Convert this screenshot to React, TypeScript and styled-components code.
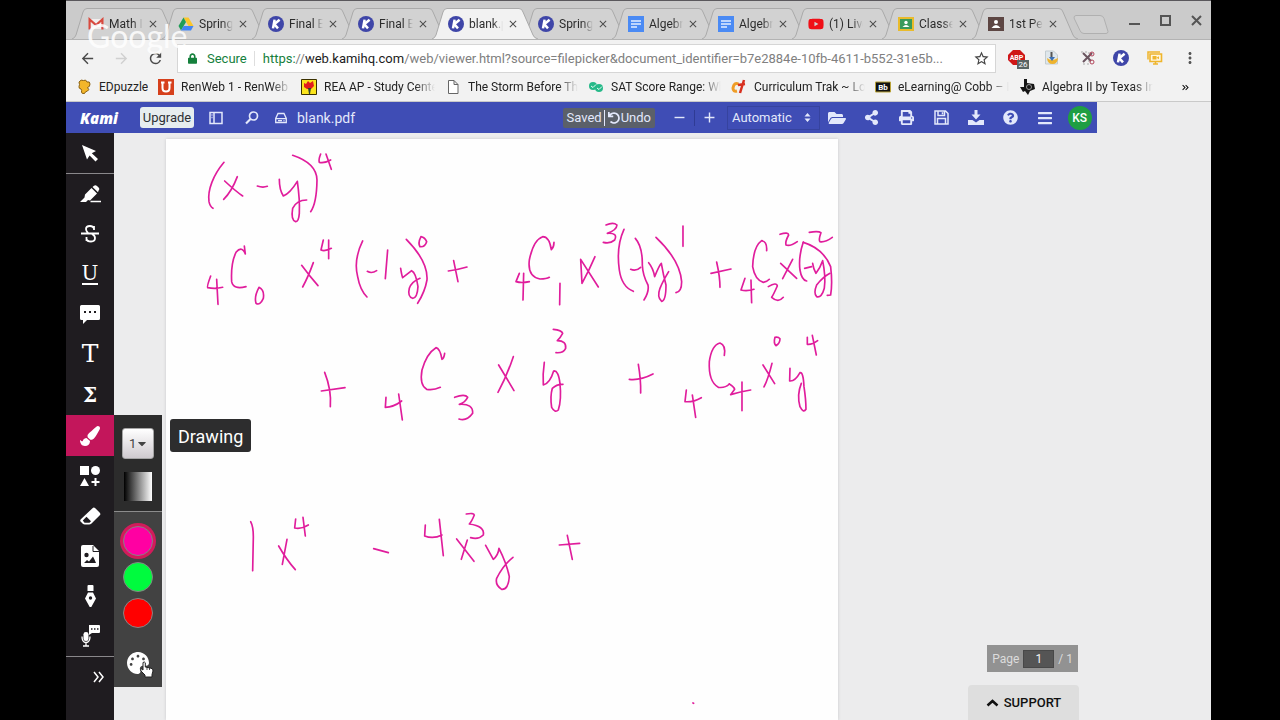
import React from "react";
import styled, { createGlobalStyle, css } from "styled-components";
import {
  FaPaintBrush, FaPalette, FaFolderOpen, FaShareAlt, FaPrint,
  FaQuestionCircle, FaBars, FaUndo, FaLock, FaYoutube, FaCaretDown,
} from "react-icons/fa";
import {
  MdArrowBack, MdArrowForward, MdRefresh, MdStarBorder, MdMoreVert, MdClose, MdKeyboardDoubleArrowRight,
  MdAdd, MdRemove,
} from "react-icons/md";

const GlobalStyle = createGlobalStyle`
  * { box-sizing: border-box; }
  body { margin: 0; background: #000; font-family: Roboto, "Liberation Sans", sans-serif; }
  button, input, select { font: inherit; color: inherit; margin: 0; }
`;

const Shell = styled.div`
  height: 100vh;
  padding: 0 69px 0 66px;
  background: #000;
  overflow: hidden;
`;
const Window = styled.div`
  height: 100%;
  display: flex;
  flex-direction: column;
  position: relative;
  background: #ececed;
`;
const PlainButton = styled.button`
  display: flex;
  align-items: center;
  justify-content: center;
  padding: 0;
  border: 0;
  background: none;
`;

/* Tab strip */
const TabStrip = styled.div`
  flex: none;
  height: 39px;
  display: flex;
  padding: 7px 0 0 6px;
  background: #cbcbcb;
  border-top: 1px solid #5a585c;
`;
const TabItem = styled.div<{ $active?: boolean }>`
  position: relative;
  z-index: ${(p) => (p.$active ? 1 : 0)};
  flex: 0 1 90px;
  min-width: 0;
  height: 31px;
  display: flex;
  align-items: center;
  padding-left: 16px;
`;
const TabShape = styled.svg`
  position: absolute;
  left: 0;
  top: 0;
  width: 106px;
  height: 31px;
  z-index: -1;
`;
const TabLink = styled.a`
  display: flex;
  align-items: center;
  gap: 5px;
  color: #2c2c2c;
  text-decoration: none;
  font-size: 12px;
  line-height: 16px;
`;
const TabTitle = styled.span`
  width: 34px;
  overflow: hidden;
  white-space: nowrap;
  mask-image: linear-gradient(90deg, #000 70%, transparent);
`;
const TabClose = styled(PlainButton)`
  position: relative;
  margin-left: 4px;
  width: 12px;
  height: 16px;
  flex: none;
  color: #4c4c4c;
  font-size: 12px;
`;
const NewTab = styled(PlainButton)`
  margin: 7px 0 0 11px;
  width: 36px;
  height: 20px;
`;
const WindowControls = styled.div`
  margin-left: auto;
  padding: 0 9px 0 0;
  display: flex;
  gap: 20px;
  height: 24px;
  align-items: center;
`;
const WindowButton = styled(PlainButton)`
  width: 11px;
  height: 22px;
`;

/* Address row */
const AddressRow = styled.div`
  flex: none;
  height: 37px;
  display: flex;
  align-items: center;
  padding-right: 4px;
  background: #f2f2f2;
  border-top: 1px solid #b3b3b3;
`;
const NavButtons = styled.div`
  display: flex;
  width: 111px;
  padding-left: 4px;
`;
const NavButton = styled(PlainButton)`
  width: 34px;
  height: 28px;
  font-size: 17px;
  color: #4a4a4a;
  &:disabled { color: #d0d0d0; }
`;
const Omnibox = styled.div`
  flex: 1;
  min-width: 0;
  height: 29px;
  display: flex;
  align-items: center;
  padding: 0 5px 0 10px;
  background: #fff;
  border: 1px solid #d6d6d6;
  font-size: 13px;
`;
const Secure = styled.span`
  display: flex;
  align-items: center;
  gap: 10px;
  padding-right: 7px;
  margin-right: 8px;
  border-right: 1px solid #dedede;
  color: #15803c;
  svg { width: 9px; height: 11px; }
`;
const Url = styled.span`
  flex: 1;
  min-width: 0;
  overflow: hidden;
  white-space: nowrap;
  color: #808080;
  b { font-weight: 400; color: #1c1c1c; }
  i { font-style: normal; color: #15803c; }
`;
const Extensions = styled.div`
  display: flex;
  width: 211px;
  padding-left: 5px;
`;
const Extension = styled(PlainButton)`
  flex: 1;
  height: 28px;
  color: #555;
`;

/* Bookmarks */
const Bookmarks = styled.nav`
  flex: none;
  height: 26px;
  display: flex;
  align-items: center;
  padding: 0 20px 3px 11px;
  background: #f2f2f2;
  border-bottom: 1px solid #c9c9c9;
`;
const Bookmark = styled.a<{ $width: number }>`
  flex: 0 1 ${(p) => p.$width}px;
  min-width: 0;
  display: flex;
  align-items: center;
  gap: 7px;
  color: #222;
  text-decoration: none;
  font-size: 12px;
  line-height: 16px;
`;
const BookmarkText = styled.span<{ $fade?: boolean }>`
  flex: 1;
  margin-right: 10px;
  overflow: hidden;
  white-space: nowrap;
  ${(p) => p.$fade && css`mask-image: linear-gradient(90deg, #000 82%, transparent);`}
`;

/* Kami header */
const Header = styled.header`
  flex: none;
  height: 31px;
  margin-right: 114px;
  display: flex;
  align-items: center;
  background: #3f4db5;
  color: #e3e8fb;
`;
const Brand = styled.a`
  width: 74px;
  padding-left: 14px;
  color: #fff;
  text-decoration: none;
  font: italic 800 15px/20px "Open Sans", sans-serif;
`;
const Upgrade = styled.button`
  height: 21px;
  width: 54px;
  margin-right: 4px;
  padding: 0;
  border: 0;
  border-radius: 3px;
  background: #e6edef;
  color: #2c3035;
  font-size: 13px;
`;
const HeaderButton = styled(PlainButton)`
  width: 36px;
  height: 30px;
`;
const FileName = styled.span`
  display: flex;
  align-items: center;
  gap: 10px;
  padding-left: 5px;
  font-size: 14px;
  line-height: 20px;
`;
const SaveState = styled.div`
  margin-left: auto;
  height: 20px;
  display: flex;
  align-items: center;
  padding: 0 4px;
  border-radius: 2px;
  background: #5b6069;
  font-size: 13px;
  line-height: 16px;
`;
const UndoButton = styled(PlainButton)`
  margin-left: 2px;
  padding-left: 3px;
  gap: 1px;
  border-left: 1px solid #e3e8fb;
`;
const ZoomButtons = styled.div`
  display: flex;
  padding-left: 10px;
  width: 72px;
`;
const ZoomButton = styled(PlainButton)`
  width: 29px;
  height: 16px;
  font-size: 17px;
  & + & { border-left: 1px solid #2f3b94; }
`;
const ZoomSelect = styled.label`
  display: flex;
  align-items: center;
  width: 93px;
  height: 24px;
  padding: 0 8px 0 4px;
  border: 1px solid #36439f;
  font-size: 13px;
  select { flex: 1; min-width: 0; padding: 0; border: 0; background: none; appearance: none; }
`;
const Actions = styled.div`
  display: grid;
  grid-template-columns: repeat(8, 1fr);
  width: 277px;
  align-items: center;
  font-size: 15px;
`;
const Avatar = styled(PlainButton)`
  justify-self: center;
  width: 24px;
  height: 24px;
  border-radius: 50%;
  background: #1f9e43;
  color: #fff;
  font-size: 12px;
  font-weight: 500;
`;

/* Work area */
const Workspace = styled.main`
  flex: 1;
  min-height: 0;
  position: relative;
  display: flex;
`;
const ToolRail = styled.div`
  flex: none;
  width: 48px;
  display: flex;
  flex-direction: column;
  background: #1f1c20;
  color: #fff;
`;
const Tool = styled(PlainButton)<{ $tall?: boolean; $active?: boolean }>`
  flex: none;
  width: 48px;
  height: ${(p) => (p.$tall ? 41 : 40)}px;
  background: ${(p) => (p.$active ? "#c3165b" : "transparent")};
  font-size: 20px;
`;
const ToolRule = styled.div`
  flex: none;
  height: 1px;
  background: #8a888b;
`;
const Glyph = styled.span<{ $kind: "text" | "underline" | "sum" }>`
  font-family: "DejaVu Serif", serif;
  font-size: ${(p) => (p.$kind === "text" ? 25 : 20)}px;
  line-height: ${(p) => (p.$kind === "underline" ? 19 : 24)}px;
  font-weight: ${(p) => (p.$kind === "sum" ? 700 : 400)};
  border-bottom: ${(p) => (p.$kind === "underline" ? "2px solid #fff" : "0")};
`;
const Anchor = styled.div`
  position: relative;
`;
const Flyout = styled.div`
  position: absolute;
  z-index: 2;
  left: 100%;
  top: 0;
  width: 48px;
  height: 272px;
  display: flex;
  flex-direction: column;
  background: #424242;
`;
const FlyoutTop = styled.div`
  display: flex;
  flex-direction: column;
  align-items: center;
  gap: 13px;
  height: 97px;
  padding-top: 13px;
  background: #2c2c2c;
  border-bottom: 1px solid #8c8c8c;
`;
const SizeSelect = styled.label`
  display: flex;
  align-items: center;
  width: 32px;
  height: 31px;
  padding: 0 6px;
  border-radius: 3px;
  border: 1px solid #a5a5a5;
  background: linear-gradient(#fff, #cfcacf);
  color: #444;
  font-size: 13px;
  select { width: 8px; padding: 0; border: 0; background: none; appearance: none; }
`;
const Opacity = styled.button`
  width: 28px;
  height: 29px;
  padding: 0;
  border: 0;
  background: linear-gradient(90deg, #000, #fff);
`;
const Swatches = styled.div`
  display: flex;
  flex-direction: column;
  align-items: center;
  gap: 6px;
  padding-top: 14px;
`;
const Swatch = styled.input<{ $color: string }>`
  appearance: none;
  width: 30px;
  height: 30px;
  border-radius: 50%;
  border: 1px solid #858585;
  background: ${(p) => p.$color};
  &:checked { box-shadow: 0 0 0 3px #d31b5b; }
`;
const PaletteButton = styled(PlainButton)`
  position: relative;
  margin-top: 15px;
  height: 28px;
  color: #fff;
  font-size: 22px;
`;
const HandCursor = styled.svg`
  position: absolute;
  left: 12px;
  top: 12px;
`;
const Tooltip = styled.div`
  position: absolute;
  z-index: 2;
  left: 104px;
  top: 4px;
  height: 33px;
  padding: 0 8px;
  border-radius: 3px;
  background: #2d2d2e;
  font-size: 18px;
  line-height: 35px;
`;
const Viewer = styled.section`
  flex: 1;
  min-width: 0;
  display: flex;
  padding: 6px 0 0 52px;
  overflow: hidden;
`;
const Sheet = styled.article`
  flex: 0 1 672px;
  background: #fefefe;
  box-shadow: 0 0 3px #c8c8ca;
`;
const Ink = styled.svg`
  display: block;
  fill: none;
  stroke: #e01d9c;
  stroke-width: 5;
  stroke-linecap: round;
  stroke-linejoin: round;
`;
const Dock = styled.div`
  position: absolute;
  right: 132px;
  bottom: 0;
  display: flex;
  flex-direction: column;
  align-items: flex-end;
  gap: 13px;
`;
const Pager = styled.label`
  display: flex;
  align-items: center;
  gap: 4px;
  height: 27px;
  margin-right: 1px;
  padding: 0 5px;
  background: #929292;
  color: #dcdcdc;
  font-size: 12px;
  input {
    width: 31px;
    height: 18px;
    padding: 0;
    border: 1px solid #484848;
    background: #555;
    color: #f4f4f4;
    text-align: center;
  }
`;
const Support = styled(PlainButton)`
  width: 111px;
  height: 35px;
  gap: 5px;
  border-radius: 4px 4px 0 0;
  background: #dedede;
  color: #111;
  font-size: 13px;
  font-weight: 500;
`;
const Watermark = styled.div`
  position: absolute;
  z-index: 3;
  left: 21px;
  top: 17px;
  color: rgba(255, 255, 255, 0.85);
  font: 32px/38px Lato, sans-serif;
  pointer-events: none;
`;

const KamiMark = ({ size = 16 }: { size?: number }) => (
  <svg width={size} height={size} viewBox="0 0 16 16">
    <circle cx="8" cy="8" r="8" fill="#3f46a8" />
    <path d="M6.6 3.6 5 12.4M11.6 3.8 6.2 8.2 10 12.4" stroke="#fff" strokeWidth="2.5" fill="none" />
  </svg>
);
const icons: Record<string, React.ReactNode> = {
  gmail: (
    <svg width="16" height="16" viewBox="0 0 16 16">
      <path d="M1 3h14v10H1z" fill="#f1eeee" />
      <path d="M1.6 13.5V3.5L8 9l6.4-5.5v10" stroke="#d84a3f" strokeWidth="2.2" fill="none" />
    </svg>
  ),
  drive: (
    <svg width="16" height="16" viewBox="0 0 16 16">
      <path d="M5.5 1.5h5l5 8.5h-5z" fill="#fbc62c" />
      <path d="M5.5 1.5 8 6 3 14.5.5 10z" fill="#1f9d57" />
      <path d="M5.6 10h9.9L13 14.5H3z" fill="#4285f4" />
    </svg>
  ),
  kami: <KamiMark />,
  docs: (
    <svg width="16" height="16" viewBox="0 0 16 16">
      <path d="M0 0h16v16H0z" fill="#4a8af4" />
      <path d="M3 5h10M3 8h10M3 11h6" stroke="#e4eeff" strokeWidth="1.4" />
    </svg>
  ),
  youtube: <FaYoutube size={16} color="#f00f17" />,
  classroom: (
    <svg width="16" height="16" viewBox="0 0 16 16">
      <path d="M0 1h16v14H0z" fill="#e9bb2c" />
      <path d="M2 3h12v10H2z" fill="#3a9a5c" />
      <circle cx="8" cy="6.5" r="1.7" fill="#fff" />
      <path d="M4.5 11q3.500-4 7 0z" fill="#fff" />
    </svg>
  ),
  roster: (
    <svg width="16" height="16" viewBox="0 0 16 16">
      <path d="M0 1h16v14H0z" fill="#5d4643" />
      <circle cx="8" cy="6" r="2" fill="#fff" />
      <path d="M3.500 12q4.500-6 9 0z" fill="#fff" />
    </svg>
  ),
  edpuzzle: (
    <svg width="15" height="16" viewBox="0 0 15 16">
      <path d="M2 3q2-3 4.500-1.500Q9 0 10 3q3-1 3 2t-2.500 3.500Q13 11 10.500 12q-2.500.5-3 2.500-3 .5-3-1.500Q5 11 4 10q-2.500-.5-2-2.500Q3 6 2 3z" fill="#f3b62a" stroke="#8a6113" />
    </svg>
  ),
  renweb: (
    <svg width="16" height="16" viewBox="0 0 16 16">
      <path d="M0 0h16v16H0z" fill="#d6401c" />
      <path d="M4.500 3v6q0 3.500 3.500 3.500t3.500-3.500V3M3 3.500h3.500M10 3.500h3.500" stroke="#fff" strokeWidth="2" fill="none" />
    </svg>
  ),
  rea: (
    <svg width="16" height="16" viewBox="0 0 16 16">
      <path d="M.5.5h15v15H.5z" fill="#fbe51d" stroke="#3a3000" />
      <path d="M3 4l2 1 2-3 2 2 3-2 1 5-3 3H6L3 8z" fill="#e21d1d" />
      <path d="M7 9h3l-1 6H8z" fill="#343" />
    </svg>
  ),
  page: (
    <svg width="16" height="16" viewBox="0 0 16 16">
      <path d="M3.500 1.500h5.500l4 4v9h-9.500zM9 1.500v4h4" fill="#fff" stroke="#666" />
    </svg>
  ),
  sat: (
    <svg width="16" height="16" viewBox="0 0 16 16">
      <circle cx="5" cy="7" r="4" fill="#27b989" />
      <circle cx="11" cy="9" r="4" fill="#27b989" />
      <path d="M3 7l2 1.500 3-3M9 9l2 1.500 3-3" stroke="#e8fff6" fill="none" />
    </svg>
  ),
  trak: (
    <svg width="16" height="16" viewBox="0 0 16 16">
      <path d="M7.500 5Q3 3 2 9q0 4 4 3" stroke="#ef9d27" strokeWidth="3" fill="none" />
      <path d="M13 1 9 14M7 6l7-1" stroke="#d8301f" strokeWidth="2.5" />
    </svg>
  ),
  bb: (
    <svg width="16" height="16" viewBox="0 0 16 16">
      <path d="M.5 3h15v10H.5z" fill="#111" stroke="#b8a23a" />
      <text x="8" y="11" textAnchor="middle" fontSize="8" fontWeight="700" fill="#fff">Bb</text>
    </svg>
  ),
  texas: (
    <svg width="16" height="16" viewBox="0 0 16 16">
      <path d="M5 0h3v4l7 1 1 5-5 2-2 4-3-4-2 1-3-5h4z" fill="#151515" />
      <circle cx="10" cy="8" r="2.500" stroke="#999" fill="none" />
    </svg>
  ),
};

const tabs: [string, string, boolean?][] = [
  ["gmail", "Math I"], ["drive", "Spring"], ["kami", "Final E"], ["kami", "Final E"], ["kami", "blank.p", true],
  ["kami", "Spring"], ["docs", "Algebra"], ["docs", "Algebra"], ["youtube", "(1) Live"], ["classroom", "Classes"],
  ["roster", "1st Per"],
];
const bookmarks: [string, string, number, boolean?][] = [
  ["edpuzzle", "EDpuzzle", 81],
  ["renweb", "RenWeb 1 - RenWeb I", 143, true],
  ["rea", "REA AP - Study Center", 144, true],
  ["page", "The Storm Before The", 143, true],
  ["sat", "SAT Score Range: Wha", 143, true],
  ["trak", "Curriculum Trak ~ Log", 144, true],
  ["bb", "eLearning@ Cobb – Ho", 144, true],
  ["texas", "Algebra II by Texas Ins", 144, true],
];

/* Handwriting: each block of strokes is recorded at three times the sheet's scale. */
const ink: { x: number; y: number; strokes: string[] }[] = [
  {
    x: 24, y: 1,
    strokes: [
      "M102 67C70 105 52 150 57 185Q60 200 69 205", "M104 123Q135 152 158 168M142 110Q125 155 101 178", "M202 138Q218 144 232 139",
      "M268 118Q268 150 280 168Q300 160 322 124Q330 180 328 220Q326 246 317 245Q302 240 308 205Q320 180 350 180",
      "M308 46Q380 70 381 120Q380 190 362 215", "M392 42Q385 60 388 67Q405 70 422 60M408 42L424 88",
      "M62 408Q50 440 53 443Q75 448 98 442M80 418L84 493", "M163 318L166 342Q156 316 138 337Q122 370 125 425Q130 450 168 440",
      "M207 442Q192 470 198 490Q210 498 220 475Q224 450 207 442", "M335 376Q360 410 384 437M370 368Q355 410 338 441",
      "M400 300L393 330Q405 335 424 325M416 300L416 356", "M518 303Q490 360 503 410Q510 450 531 471", "M532 394Q545 402 560 392",
      "M593 330L586 416", "M632 385Q635 405 638 413Q655 400 665 392Q678 398 684 440Q682 475 668 475Q652 470 658 445Q665 425 690 415",
      "M649 298Q715 365 711 420Q705 455 683 490", "M693 290Q683 310 690 320Q705 322 710 305Q705 292 693 290", "M775 393Q800 390 831 381M791 362L804 425",
    ],
  },
  {
    x: 324, y: 71,
    strokes: [
      "M88 190L78 215Q95 220 118 215M101 190L99 270", "M192 97Q192 112 184 119Q178 80 158 80Q130 90 118 150Q112 200 150 207Q170 207 178 202",
      "M210 220L209 284", "M276 220L272 148L325 231M315 140Q298 180 276 220", "M348 45Q370 35 381 45Q380 60 352 70Q385 68 374 90Q360 102 340 97",
      "M402 58Q378 110 388 180Q395 230 430 244", "M422 178Q438 185 452 172", "M436 85Q458 110 457 165Q458 195 474 225Q478 245 462 270",
      "M476 158Q490 175 494 200Q508 165 514 160Q520 195 528 225Q528 272 515 274Q500 262 510 235Q518 215 536 185",
      "M498 82Q570 150 575 215Q575 245 558 248", "M579 48L579 109", "M663 190L723 177M680 156Q690 200 690 232",
      "M765 205L753 240Q770 245 792 238M783 210L785 278", "M830 122Q832 95 815 92Q790 110 788 170Q795 210 820 217Q832 215 838 208",
      "M835 230Q860 215 862 228Q850 255 845 262Q865 280 880 262", "M872 160L920 205M908 148L878 206",
      "M870 73Q895 65 896 75Q885 95 888 105Q900 110 922 95", "M940 96Q925 140 930 180Q935 210 950 213", "M944 175L965 170",
      "M968 160Q970 175 978 190Q990 175 998 152Q1008 200 1003 235Q995 265 980 260Q970 250 980 225Q1000 200 1020 190",
      "M940 97Q1000 115 1022 170Q1028 220 1022 255L1012 256", "M958 67Q985 62 993 68Q985 90 990 95Q1005 98 1027 82",
    ],
  },
  {
    x: 144, y: 181,
    strokes: [
      "M34 213L105 203M44 157Q65 210 61 260", "M228 232L226 262Q250 262 275 243M266 222L277 300",
      "M404 100Q402 115 396 118Q390 85 378 83Q350 100 336 150Q328 195 350 208Q370 212 391 202",
      "M434 232Q465 220 473 232Q465 248 448 253Q490 250 488 280Q470 305 447 297", "M566 135L612 212M610 110Q590 170 564 217",
      "M703 127Q698 160 700 195Q720 190 731 153Q745 150 750 190Q755 240 745 270Q735 280 725 262Q720 230 727 205Q740 192 759 193",
      "M730 28Q755 30 758 40Q750 55 742 62Q770 62 767 85Q760 100 738 98",
    ],
  },
  {
    x: 444, y: 181,
    strokes: [
      "M58 178Q90 182 129 162M85 133Q93 180 92 219", "M229 210L225 245Q250 247 274 233M247 225L257 292",
      "M343 106Q348 75 330 69Q305 75 298 125Q295 185 325 202Q345 205 358 192", "M358 192Q372 200 374 208L362 224Q390 215 422 210M396 186L396 272",
      "M459 135L494 191M486 130Q475 175 462 201", "M495 52Q490 70 498 77Q510 70 510 56Q505 50 495 52",
      "M540 145L539 183Q555 185 570 158Q580 155 582 200Q588 240 588 268Q580 280 570 260Q560 225 574 190", "M592 52L592 73Q605 75 623 62M607 46L619 105",
    ],
  },
  {
    x: 64, y: 361,
    strokes: [
      "M62 65Q70 80 70 110L68 212", "M146 138Q170 180 196 209M171 118L157 193", "M197 57L194 84Q215 88 235 75M219 52L226 108",
      "M431 146L475 158", "M586 75L584 108Q610 118 636 105M628 58L640 167", "M680 117L732 184M712 120L694 178",
      "M709 42Q732 38 733 45Q725 65 718 72Q765 78 760 105Q745 120 722 113",
      "M767 136L790 178Q805 165 807 145Q830 190 838 230Q835 270 815 268Q795 255 800 235Q820 195 849 172", "M988 135L1049 130M1012 106L1027 178",
      "M1389 609L1391 610",
    ],
  },
];

export default function App() {
  return (
    <Shell>
      <GlobalStyle />
      <Window>
        <TabStrip>
          {tabs.map(([icon, title, active], i) => (
            <TabItem key={i} $active={active}>
              <TabShape viewBox="0 0 106 31">
                <path d="M0 31Q3 30 4 27L11 4Q12 .5 15 .5H87Q90 .5 91 4L101 27Q102 30 106 31" fill={active ? "#f2f2f2" : "#d2d2d2"} stroke="#aaa" />
              </TabShape>
              <TabLink href="#">
                {icons[icon]}
                <TabTitle>{title}</TabTitle>
              </TabLink>
              <TabClose aria-label={`Close ${title}`}><MdClose /></TabClose>
            </TabItem>
          ))}
          <NewTab aria-label="New tab">
            <svg width="36" height="20" viewBox="0 0 36 20">
              <path d="M3 .5h24q3 0 4 3l4 13q0 2-2 2H11q-3 0-4-3L1 3Q1 .5 3 .5z" fill="#d0d0d0" stroke="#b0b0b0" />
            </svg>
          </NewTab>
          <WindowControls>
            <WindowButton aria-label="Minimize"><svg width="11" height="11"><path d="M0 9h11" stroke="#555" strokeWidth="2" /></svg></WindowButton>
            <WindowButton aria-label="Maximize"><svg width="11" height="11"><path d="M1 1h9v9H1z" fill="none" stroke="#555" strokeWidth="2" /></svg></WindowButton>
            <WindowButton aria-label="Close window"><svg width="11" height="11"><path d="M1 1l9 9M10 1l-9 9" stroke="#555" strokeWidth="2" /></svg></WindowButton>
          </WindowControls>
        </TabStrip>

        <AddressRow>
          <NavButtons>
            <NavButton aria-label="Back"><MdArrowBack /></NavButton>
            <NavButton aria-label="Forward" disabled><MdArrowForward /></NavButton>
            <NavButton aria-label="Reload"><MdRefresh /></NavButton>
          </NavButtons>
          <Omnibox>
            <Secure><FaLock />Secure</Secure>
            <Url role="textbox" aria-label="Address">
              <i>https:</i>//<b>web.kamihq.com</b>/web/viewer.html?source=filepicker&amp;document_identifier=b7e2884e-10fb-4611-b552-31e5b...
            </Url>
            <PlainButton aria-label="Bookmark this page"><MdStarBorder size={17} color="#444" /></PlainButton>
          </Omnibox>
          <Extensions>
            <Extension aria-label="Adblock Plus">
              <svg width="22" height="22" viewBox="0 0 22 22">
                <path d="M6 3h7l5 5v5l-5 5H6L1 13V8z" fill="#cf1717" />
                <text x="9.500" y="13" textAnchor="middle" fontSize="7" fontWeight="700" fill="#fff">ABP</text>
                <path d="M10 13h12v9H10z" fill="#5a6464" />
                <text x="16" y="20" textAnchor="middle" fontSize="8" fill="#fff">26</text>
              </svg>
            </Extension>
            <Extension aria-label="Downloads">
              <svg width="16" height="16" viewBox="0 0 16 16">
                <path d="M1.500 1h8l4 4v9h-12z" fill="#dfe7ec" stroke="#c3ccd0" />
                <path d="M7.500 2v6" stroke="#555" strokeWidth="2" />
                <path d="M3 8q4.500 4 11 0-.5 6-5.500 6T3 8z" fill="#eeb32d" />
                <path d="M5 7h6l-3 4z" fill="#3b70b5" />
              </svg>
            </Extension>
            <Extension aria-label="Snip">
              <svg width="16" height="16" viewBox="0 0 16 16">
                <path d="M2 2h8v12H2" fill="none" stroke="#aaa" strokeDasharray="2 2" />
                <path d="M4 3l8 8M4 12l9-9" stroke="#6b5560" strokeWidth="2" />
                <circle cx="13" cy="4" r="2" stroke="#b2455a" fill="none" /><circle cx="13" cy="12" r="2" stroke="#b2455a" fill="none" />
              </svg>
            </Extension>
            <Extension aria-label="Kami extension"><KamiMark /></Extension>
            <Extension aria-label="Screencast">
              <svg width="16" height="16" viewBox="0 0 16 16">
                <path d="M1 9.500V2h12" stroke="#efb52c" strokeWidth="1.500" fill="none" />
                <path d="M3 4h11.500v7.500H3zM6 14h5M8.500 12v2" stroke="#efb52c" strokeWidth="1.600" fill="#fff6dc" />
                <path d="M5.500 6h4v3.500h-4zM9.500 7.700l2.500-1.500v3z" fill="#efb52c" />
              </svg>
            </Extension>
            <Extension aria-label="Menu"><MdMoreVert size={18} /></Extension>
          </Extensions>
        </AddressRow>

        <Bookmarks>
          {bookmarks.map(([icon, text, width, fade]) => (
            <Bookmark href="#" key={text} $width={width}>
              {icons[icon]}
              <BookmarkText $fade={fade}>{text}</BookmarkText>
            </Bookmark>
          ))}
          <PlainButton aria-label="More bookmarks" style={{ marginLeft: "auto" }}><MdKeyboardDoubleArrowRight size={11} /></PlainButton>
        </Bookmarks>

        <Header>
          <Brand href="#">Kami</Brand>
          <Upgrade>Upgrade</Upgrade>
          <HeaderButton aria-label="Toggle side panel">
            <svg width="14" height="14" viewBox="0 0 14 14"><path d="M1 1.500h12v11H1zM5 1v12M2.500 4h1M2.500 6.500h1" fill="none" stroke="currentColor" strokeWidth="1.500" /></svg>
          </HeaderButton>
          <HeaderButton aria-label="Search">
            <svg width="14" height="14" viewBox="0 0 14 14"><circle cx="8.500" cy="5" r="4" fill="none" stroke="currentColor" strokeWidth="1.700" /><path d="M5.500 8 1 12.500" stroke="currentColor" strokeWidth="2.200" /></svg>
          </HeaderButton>
          <FileName>
            <svg width="12" height="12" viewBox="0 0 12 12"><path d="M3 1.500h6l2.300 5v4H.7v-4zM1 6.700h10M3 8.700h4M8.500 8.700h1" fill="none" stroke="currentColor" strokeWidth="1.300" /></svg>
            blank.pdf
          </FileName>
          <SaveState>Saved<UndoButton><FaUndo size={12} />Undo</UndoButton></SaveState>
          <ZoomButtons>
            <ZoomButton aria-label="Zoom out"><MdRemove /></ZoomButton>
            <ZoomButton aria-label="Zoom in"><MdAdd /></ZoomButton>
          </ZoomButtons>
          <ZoomSelect>
            <select aria-label="Zoom level"><option>Automatic</option></select>
            <svg width="7" height="9" viewBox="0 0 7 9"><path d="M3.500 0 6.500 3.500h-6zM3.500 9l3-3.500h-6z" fill="currentColor" /></svg>
          </ZoomSelect>
          <Actions>
            <PlainButton aria-label="Open"><FaFolderOpen size={18} /></PlainButton>
            <PlainButton aria-label="Share"><FaShareAlt /></PlainButton>
            <PlainButton aria-label="Print"><FaPrint /></PlainButton>
            <PlainButton aria-label="Save">
              <svg width="15" height="15" viewBox="0 0 15 15"><path d="M1 1h10.500L14 3.500V14H1zM4 1v4.500h6.500V1M3.500 14V8.500h8V14M8.500 2.200v2" fill="none" stroke="currentColor" strokeWidth="1.500" /></svg>
            </PlainButton>
            <PlainButton aria-label="Download">
              <svg width="16" height="16" viewBox="0 0 16 16"><path d="M6.500 0h3v4.500h3L8 9.500 3.500 4.500h3z" fill="currentColor" /><path d="M0 10h4.500L8 12.500 11.500 10H16v5H0z" fill="currentColor" /></svg>
            </PlainButton>
            <PlainButton aria-label="Help"><FaQuestionCircle /></PlainButton>
            <PlainButton aria-label="Menu"><FaBars size={16} /></PlainButton>
            <Avatar aria-label="Account">KS</Avatar>
          </Actions>
        </Header>

        <Workspace>
          <ToolRail>
            <Tool aria-label="Select">
              <svg width="16" height="17" viewBox="0 0 16 17"><path d="M0 0 14 6 9.800 8.300 16 14 13.500 16.500 7.600 10.500 5 14.500z" fill="#fff" /></svg>
            </Tool>
            <ToolRule />
            <Tool aria-label="Highlight">
              <svg width="21" height="18" viewBox="0 0 21 18"><path d="M5 9.500 11.500 3 17 8.500 10 15.500 8 15 6 17H0L4.500 12.500zM12.500 2 14 .8q1.500-1.200 3 .2l1.600 1.600q1.400 1.500 0 3L18 7.300z" fill="#fff" /><path d="M10.500 16.500H21" stroke="#fff" strokeWidth="1.500" /></svg>
            </Tool>
            <Tool aria-label="Strikethrough">
              <svg width="18" height="20" viewBox="0 0 18 20"><path d="M0 9.500h18M13 6V2M13 4.500Q12 2 9 2 5 2 5 5q0 2 2 4M11 10q3 1.500 3 4 0 3.500-4 3.500T5.500 15M5.500 13v4" fill="none" stroke="#fff" strokeWidth="1.800" /></svg>
            </Tool>
            <Tool aria-label="Underline"><Glyph $kind="underline">U</Glyph></Tool>
            <Tool aria-label="Comment">
              <svg width="20" height="20" viewBox="0 0 20 20"><path d="M1.500 1h17Q20 1 20 2.500v12Q20 16 18.500 16H7l-4 4v-4H1.500Q0 16 0 14.500v-12Q0 1 1.500 1z" fill="#fff" /><path d="M4 8h2M9 8h2M14 8h2" stroke="#1f1c20" strokeWidth="2" /></svg>
            </Tool>
            <Tool aria-label="Text"><Glyph $kind="text">T</Glyph></Tool>
            <Tool $tall aria-label="Equation"><Glyph $kind="sum">Σ</Glyph></Tool>
            <Anchor>
              <Tool $tall $active aria-label="Drawing"><FaPaintBrush /></Tool>
              <Flyout>
                <FlyoutTop>
                  <SizeSelect>
                    <select aria-label="Line size"><option>1</option></select>
                    <FaCaretDown size={13} />
                  </SizeSelect>
                  <Opacity aria-label="Opacity" />
                </FlyoutTop>
                <Swatches>
                  <Swatch type="radio" name="ink" aria-label="Pink" $color="#ff00a2" defaultChecked />
                  <Swatch type="radio" name="ink" aria-label="Green" $color="#00fb3e" />
                  <Swatch type="radio" name="ink" aria-label="Red" $color="#ff0000" />
                  <PaletteButton aria-label="More colors">
                    <FaPalette />
                    <HandCursor width="15" height="17" viewBox="0 0 15 17">
                      <path d="M4 1.500Q5.500.3 6.300 1.800V6l5.700 1.200q2.300.6 2 2.800l-1 3.500v2.500H6V14L2 10Q1 8.500 2.500 8L4 9z" fill="#fff" stroke="#222" />
                      <path d="M8 6.500v2.500M10.500 7v2" stroke="#222" strokeWidth=".8" />
                    </HandCursor>
                  </PaletteButton>
                </Swatches>
              </Flyout>
              <Tooltip role="tooltip">Drawing</Tooltip>
            </Anchor>
            <Tool aria-label="Shapes">
              <svg width="20" height="20" viewBox="0 0 20 20"><path d="M0 0h9v9H0zM4.500 12 9 20H0z" fill="#fff" /><circle cx="15.500" cy="4.500" r="4.500" fill="#fff" /><path d="M15.500 12v8M11.500 16h8" stroke="#fff" strokeWidth="2" /></svg>
            </Tool>
            <Tool aria-label="Eraser">
              <svg width="21" height="18" viewBox="0 0 21 18"><path d="M12.500 1.200q1.300-1.400 2.800 0l4.500 4.500q1.200 1.300 0 2.600L11.500 16.500q-1 1-2.500 1H5Q3.500 17.500 2.500 16.500L.8 14.800q-1.200-1.300 0-2.600z" fill="#fff" /><path d="M6.500 9.800 11 14.300 9.500 15.700H4.500L2.800 13.500z" fill="#1f1c20" /></svg>
            </Tool>
            <Tool aria-label="Image">
              <svg width="18" height="22" viewBox="0 0 18 22"><path d="M2 0h10l6 6v14q0 2-2 2H2q-2 0-2-2V2Q0 0 2 0z" fill="#fff" /><path d="M12 1v5.500h6" stroke="#1f1c20" fill="none" /><circle cx="5.500" cy="10" r="2.200" fill="#1f1c20" /><path d="M3 18l3-3 2 1.500 4-5 1.500 3L15 18z" fill="#1f1c20" /></svg>
            </Tool>
            <Tool aria-label="Signature">
              <svg width="11" height="22" viewBox="0 0 11 22"><path d="M2.500 1Q2.500 0 3.500 0h4q1 0 1 1v5h-6zM3 7.500h5l3 6L6.300 22H4.700L0 13.500z" fill="#fff" /><circle cx="5.500" cy="13" r="1.700" fill="#1f1c20" /></svg>
            </Tool>
            <Tool aria-label="Voice comment">
              <svg width="20" height="22" viewBox="0 0 20 22"><path d="M9 0h10q1 0 1 1v6q0 1-1 1h-7L9 10z" fill="#fff" /><path d="M11 4h1.500M14 4h1.500M17 4h1.500" stroke="#1f1c20" strokeWidth="1.500" /><rect x="3.500" y="7" width="5" height="9" rx="2.300" fill="#fff" /><path d="M2 11.500q0 6 4 6t4-6M6 17v4M3 21h6" stroke="#fff" strokeWidth="1.300" fill="none" /></svg>
            </Tool>
            <ToolRule />
            <Tool aria-label="Expand tools">
              <svg width="11" height="12" viewBox="0 0 11 12" style={{ marginLeft: 16 }}><path d="M1 1l4 5-4 5M6 1l4 5-4 5" fill="none" stroke="#fff" strokeWidth="1.500" /></svg>
            </Tool>
          </ToolRail>

          <Viewer>
            <Sheet>
              <Ink width="672" height="581" viewBox="0 0 672 581" role="img" aria-label="Handwritten binomial expansion">
                {ink.map((block) => (
                  <g key={`${block.x}-${block.y}`} transform={`translate(${block.x} ${block.y}) scale(0.3333)`}>
                    {block.strokes.map((d) => <path key={d} d={d} />)}
                  </g>
                ))}
              </Ink>
            </Sheet>
          </Viewer>

          <Dock>
            <Pager>Page<input defaultValue="1" /><span>/ 1</span></Pager>
            <Support>
              <svg width="13" height="8" viewBox="0 0 13 8"><path d="M1.500 6.500l5-4.500 5 4.500" fill="none" stroke="#111" strokeWidth="2.500" /></svg>
              SUPPORT
            </Support>
          </Dock>
        </Workspace>
        <Watermark aria-hidden="true">Google</Watermark>
      </Window>
    </Shell>
  );
}
